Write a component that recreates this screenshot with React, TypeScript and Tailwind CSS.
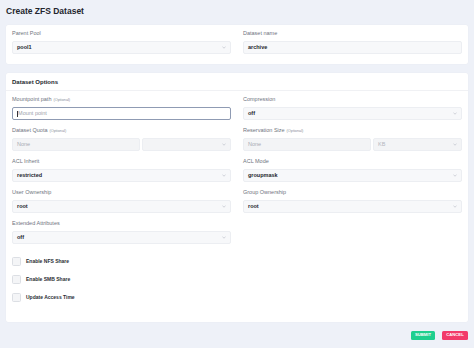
const Chevron = () => (
  <svg width="4" height="3" viewBox="0 0 4 3" className="shrink-0">
    <path d="M0.5 0.8 L2 2.2 L3.5 0.8" fill="none" stroke="#b5b9c2" strokeWidth="0.6" />
  </svg>
);

function Label({ text, optional }: { text: string; optional?: boolean }) {
  return (
    <div className="h-[8px] mb-[4px] text-[5.5px] text-[#6f7480] leading-[8px] whitespace-nowrap">
      {text}
      {optional && <span className="ml-[2px] text-[3.8px] text-[#8a8f99]">(Optional)</span>}
    </div>
  );
}

function Select({ value }: { value: string }) {
  return (
    <div className="h-[13px] flex items-center justify-between px-[4px] bg-[#f7f8fa] border border-[#eceef2] rounded-[2px]">
      <span className="text-[5.5px] font-bold text-[#23262d] leading-none">{value}</span>
      <Chevron />
    </div>
  );
}

function SizeField({ unit }: { unit: string }) {
  return (
    <div className="flex gap-[2px]">
      <div className="flex-1 h-[13px] flex items-center px-[4px] bg-[#f3f4f6] border border-[#eceef2] rounded-[2px]">
        <span className="text-[5.5px] text-[#a7abb3] leading-none">None</span>
      </div>
      <div className="w-[89px] h-[13px] flex items-center justify-between px-[4px] bg-[#f3f4f6] border border-[#eceef2] rounded-[2px]">
        <span className="text-[5.5px] text-[#b3b7bf] leading-none">{unit}</span>
        <Chevron />
      </div>
    </div>
  );
}

function Field({ children }: { children: React.ReactNode }) {
  return <div className="pb-[6px]">{children}</div>;
}

function Check({ label }: { label: string }) {
  return (
    <div className="flex items-center gap-[5px] h-[9px]">
      <div className="w-[9px] h-[9px] bg-[#f4f5f7] border border-[#dcdfe4] rounded-[1.5px]" />
      <span className="text-[5px] font-bold text-[#2a2d33] leading-none">{label}</span>
    </div>
  );
}

export default function App() {
  return (
    <div className="w-[474px] h-[348px] overflow-hidden bg-[#eef1f8] px-[6px] font-['Liberation_Sans',Arial,sans-serif]">
      <div className="h-[25px] pt-[6px]">
        <h1 className="text-[8.5px] font-bold text-[#23262d] leading-[10px]">Create ZFS Dataset</h1>
      </div>

      <div className="bg-white rounded-[2px] shadow-[0_0_1px_rgba(0,0,0,0.08)] px-[6px] pt-[4px] pb-[10px] grid grid-cols-2 gap-x-[12px]">
        <div>
          <Label text="Parent Pool" />
          <Select value="pool1" />
        </div>
        <div>
          <Label text="Dataset name" />
          <div className="h-[13px] flex items-center px-[4px] bg-[#f7f8fa] border border-[#eceef2] rounded-[2px]">
            <span className="text-[5.5px] font-bold text-[#23262d] leading-none">archive</span>
          </div>
        </div>
      </div>

      <div className="mt-[9px] h-[249px] bg-white rounded-[2px] shadow-[0_0_1px_rgba(0,0,0,0.08)]">
        <div className="h-[18px] px-[6px] flex items-center border-b border-[#f0f1f4]">
          <span className="text-[6px] font-bold text-[#23262d] leading-none">Dataset Options</span>
        </div>
        <div className="px-[6px] pt-[4px]">
          <div className="grid grid-cols-2 gap-x-[12px]">
            <Field>
              <Label text="Mountpoint path" optional />
              <div className="h-[13px] flex items-center px-[4px] bg-white border border-[#8f9bb3] rounded-[2px]">
                <span className="w-[0.6px] h-[6px] bg-[#333] mr-[0.5px]" />
                <span className="text-[5.5px] text-[#9ca1aa] leading-none">Mount point</span>
              </div>
            </Field>
            <Field>
              <Label text="Compression" />
              <Select value="off" />
            </Field>
            <Field>
              <Label text="Dataset Quota" optional />
              <SizeField unit="" />
            </Field>
            <Field>
              <Label text="Reservation Size" optional />
              <SizeField unit="KB" />
            </Field>
            <Field>
              <Label text="ACL Inherit" />
              <Select value="restricted" />
            </Field>
            <Field>
              <Label text="ACL Mode" />
              <Select value="groupmask" />
            </Field>
            <Field>
              <Label text="User Ownership" />
              <Select value="root" />
            </Field>
            <Field>
              <Label text="Group Ownership" />
              <Select value="root" />
            </Field>
            <Field>
              <Label text="Extended Attributes" />
              <Select value="off" />
            </Field>
          </div>
          <div className="mt-[7px] flex flex-col gap-[9px]">
            <Check label="Enable NFS Share" />
            <Check label="Enable SMB Share" />
            <Check label="Update Access Time" />
          </div>
        </div>
      </div>

      <div className="mt-[9px] flex justify-end gap-[7px]">
        <button className="w-[24px] h-[9px] rounded-[1.5px] bg-[#1fcf8e] text-white text-[4.2px] font-bold leading-none">SUBMIT</button>
        <button className="w-[26px] h-[9px] rounded-[1.5px] bg-[#f23a6a] text-white text-[4.2px] font-bold leading-none">CANCEL</button>
      </div>
    </div>
  );
}
